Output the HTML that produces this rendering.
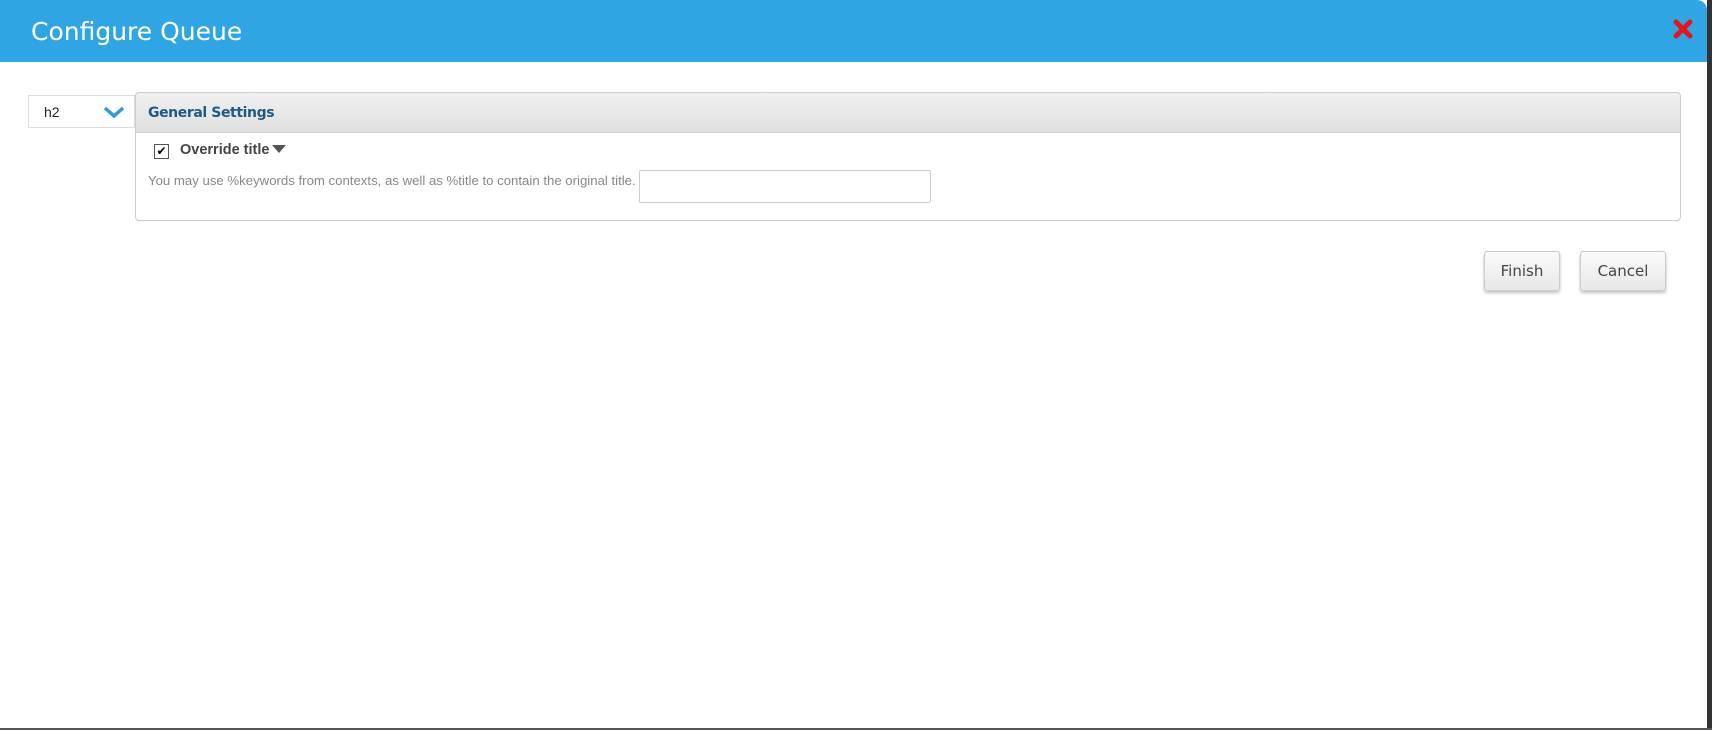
<!DOCTYPE html>
<html><head><meta charset="utf-8"><style>
*{box-sizing:border-box;margin:0;padding:0}
body{width:1712px;height:730px;background:#fff;position:relative;overflow:hidden;font-family:"Liberation Sans",sans-serif}
.hdr{position:absolute;left:0;top:0;width:1707px;height:62px;background:#30a5e4;border-top-right-radius:10px}
.hdr h1{position:absolute;left:31px;top:17px;font-weight:normal;color:#fff;font-size:25px;font-family:"DejaVu Sans","Liberation Sans",sans-serif}
.rb{position:absolute;left:1707px;top:0;width:5px;height:730px;background:#333}
.bb{position:absolute;left:0;top:728px;width:1712px;height:2px;background:#555}
.sel{position:absolute;left:28px;top:95px;width:107px;height:33px;border:1px solid #ddd;font-size:14px;color:#222;padding:8px 0 0 15px}
.panel{position:absolute;left:135px;top:92px;width:1546px;height:129px;border:1px solid #ccc;border-radius:4px;overflow:hidden}
.ph{height:40px;background:linear-gradient(#f0f0f0,#e0e0e0);border-bottom:1px solid #d5d5d5;color:#1d5a86;font-weight:bold;font-size:14px;letter-spacing:-0.4px;padding:12px 0 0 12px;font-family:"DejaVu Sans",sans-serif}
.cb{position:absolute;left:18px;top:51px;width:15px;height:15px;border:1px solid #555;font-size:12px;line-height:13px;text-align:center}
.ot{position:absolute;left:44px;top:49px;font-weight:bold;font-size:14.5px;color:#444}
.help{position:absolute;left:12px;top:80px;font-size:13.2px;color:#888}
.inp{position:absolute;left:503px;top:77px;width:292px;height:33px;border:1px solid #ccc;border-radius:2px}
.btn{position:absolute;top:251px;height:40px;border:1px solid #ccc;border-radius:3px;background:linear-gradient(#fafafa,#e8e8e8);box-shadow:0 2px 3px rgba(0,0,0,.25);font-size:15px;color:#444;text-align:center;line-height:38px;font-family:"DejaVu Sans",sans-serif}
</style></head><body>
<div class="hdr"><h1>Configure Queue</h1>
<svg style="position:absolute;left:1673px;top:19px" width="20" height="20" viewBox="0 0 20 20"><path d="M3 3L17 17M17 3L3 17" stroke="#e8141c" stroke-width="5" stroke-linecap="round"/></svg></div>
<div class="rb"></div><div class="bb"></div>
<div class="sel">h2<svg style="position:absolute;left:74px;top:9px" width="22" height="14" viewBox="0 0 22 14"><path d="M2 3L11 11L20 3" stroke="#2f9be0" stroke-width="3.5" fill="none"/></svg></div>
<div class="panel"><div class="ph">General Settings</div>
<div class="cb">✔</div>
<div class="ot">Override title<svg style="margin-left:3px;vertical-align:1px" width="14" height="8" viewBox="0 0 14 8"><path d="M0 0H14L7 8Z" fill="#555"/></svg></div>
<div class="help">You may use %keywords from contexts, as well as %title to contain the original title.</div>
<div class="inp"></div></div>
<div class="btn" style="left:1484px;width:76px">Finish</div>
<div class="btn" style="left:1580px;width:86px">Cancel</div>
</body></html>
